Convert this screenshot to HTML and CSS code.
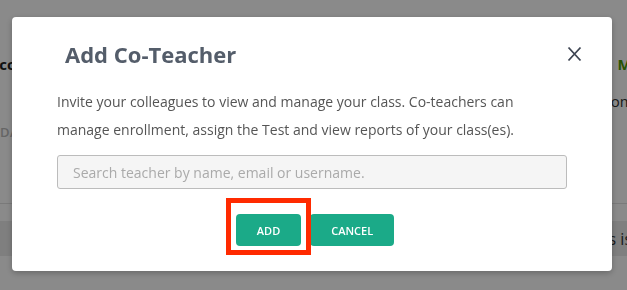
FILE: index.html
```html
<html>

<head>
  <title>Add Co-Teacher</title>
  <meta charset="UTF-8">
  <link rel="stylesheet" href="styles.css">
</head>

<body>
  <div class="page">
    <div class="row row-head">
      <div class="acct">Account Settings</div>
      <div class="manage">Manage</div>
    </div>
    <div class="row row-sub">
      <div></div>
      <div class="from">From your class</div>
    </div>
    <div class="row row-date">
      <div class="date">DATE ADDED</div>
    </div>
    <hr class="divider">
    <div class="notice">
      <span>This class is</span>
    </div>
  </div>

  <div class="backdrop"></div>

  <div class="modal-wrap">
    <div class="modal">
      <div class="modal-head">
        <h2 class="modal-title">Add Co-Teacher</h2>
        <button class="close" type="button">
          <svg width="15" height="16" viewBox="0 0 15 16">
            <path d="M1.5 1.5 L13.5 14.5 M13.5 1.5 L1.5 14.5" stroke="#3d4452" stroke-width="1.8" fill="none" />
          </svg>
        </button>
      </div>
      <div class="modal-body">
        <p class="intro">Invite your colleagues to view and manage your class. Co-teachers can manage enrollment, assign the Test and view reports of your class(es).</p>
        <input class="search" type="text" placeholder="Search teacher by name, email or username.">
      </div>
      <div class="modal-foot">
        <div class="btn-wrap">
          <button class="btn" type="button">ADD</button>
          <span class="mark"></span>
        </div>
        <button class="btn" type="button">CANCEL</button>
      </div>
    </div>
  </div>
</body>

</html>
```

FILE: styles.css
```css
body {
  margin: 0;
  width: 627px;
  height: 290px;
  overflow: hidden;
  background: #fff;
  font-family: "Open Sans", "Liberation Sans", sans-serif;
}

/* page behind the dialog */
.page {
  padding-top: 52px;
}

.row {
  display: flex;
  justify-content: space-between;
}

.row-head {
  height: 24px;
  align-items: center;
}

.acct {
  margin-left: -11px;
  font-size: 15px;
  font-weight: 700;
  color: #222;
}

.manage {
  margin-right: -50px;
  font-size: 15px;
  font-weight: 700;
  color: #4a9a00;
}

.row-sub {
  margin-top: 14px;
  height: 22px;
  align-items: center;
}

.from {
  margin-right: -80px;
  font-size: 15px;
  color: #333;
}

.row-date {
  margin-top: 10px;
  height: 20px;
  align-items: center;
}

.date {
  font-size: 13px;
  font-weight: 600;
  color: #bbb;
  letter-spacing: 0.5px;
}

.divider {
  margin: 61px 0 0;
  border: 0;
  border-top: 1px solid #e2e2e2;
}

.notice {
  margin-top: 17px;
  height: 35px;
  display: flex;
  justify-content: flex-end;
  align-items: center;
  background: #ebebeb;
}

.notice span {
  margin-right: -5px;
  font-size: 16px;
  color: #333;
}

/* dialog */
.backdrop {
  position: fixed;
  top: 0;
  left: 0;
  right: 0;
  bottom: 0;
  background: rgba(0, 0, 0, 0.46);
}

.modal-wrap {
  position: fixed;
  top: 0;
  left: 0;
  right: 0;
  bottom: 0;
  padding: 17px 0 0 12px;
}

.modal {
  width: 600px;
  height: 254px;
  box-sizing: border-box;
  background: #fff;
  border-radius: 4px;
  box-shadow: 0 2px 6px rgba(0, 0, 0, 0.25);
}

.modal-head {
  display: flex;
  justify-content: space-between;
  align-items: center;
  padding: 22px 30px 0 53px;
}

.modal-title {
  margin: 0;
  font-size: 22px;
  line-height: 30px;
  font-weight: 700;
  color: #545d6a;
}

.close {
  border: 0;
  padding: 0;
  background: none;
  display: flex;
}

.modal-body {
  padding: 0 45px;
}

.intro {
  margin: 19px 0 0;
  font-size: 14px;
  line-height: 28px;
  color: #555;
}

.search {
  display: block;
  margin-top: 11px;
  width: 100%;
  height: 34px;
  box-sizing: border-box;
  padding: 0 15px;
  border: 1px solid #bcbcbc;
  border-radius: 3px;
  background: #f5f5f5;
  font-family: "Open Sans", "Liberation Sans", sans-serif;
  font-size: 14px;
  color: #555;
}

.search::placeholder {
  color: #aaa;
}

.modal-foot {
  display: flex;
  justify-content: center;
  gap: 9px;
  margin-top: 25px;
  padding-left: 6px;
}

.btn-wrap {
  position: relative;
  display: flex;
}

.btn {
  height: 32px;
  padding: 0 21px;
  border: 0;
  border-radius: 4px;
  background: #1baa88;
  color: #fff;
  font-family: "Open Sans", "Liberation Sans", sans-serif;
  font-size: 11px;
  font-weight: 600;
}

/* red highlight drawn over the ADD button */
.mark {
  position: absolute;
  top: -16px;
  left: -10px;
  right: -10px;
  bottom: -9px;
  border: 5px solid #ff2a00;
}
```
